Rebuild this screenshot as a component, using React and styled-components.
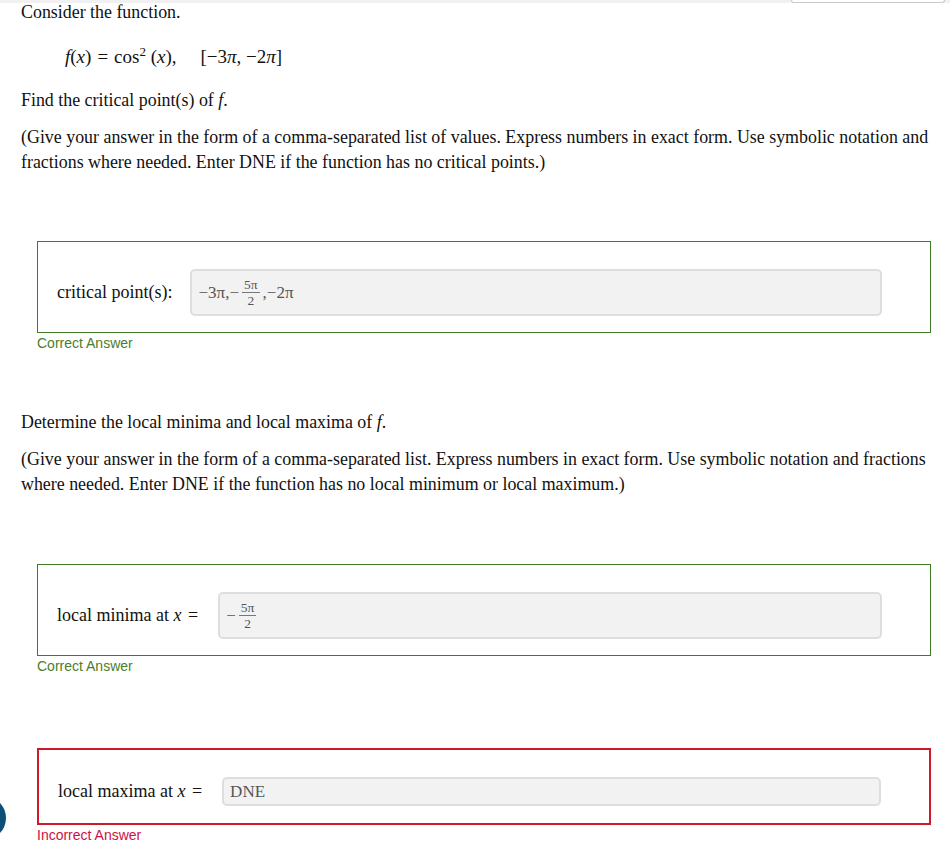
import styled, { createGlobalStyle } from 'styled-components';

const GlobalStyle = createGlobalStyle`
  body {
    margin: 0;
    background: #fff;
    font-family: "Liberation Serif", "Times New Roman", serif;
    color: #111;
  }
`;

const TopStrip = styled.div`
  display: flex;
  justify-content: flex-end;
  height: 3px;
  background: #f1f1f1;
`;

const TopTab = styled.div`
  width: 152px;
  height: 2px;
  margin-right: 5px;
  background: #fff;
  border: 1px solid #c9c9c9;
  border-top: none;
  border-radius: 0 0 4px 4px;
`;

const Page = styled.div`
  position: relative;
  padding: 0 16px 20px 21px;
  margin-top: -3px;
`;

const P = styled.p`
  margin: 0;
  font-size: 17.9px;
  line-height: 25px;
`;

const Formula = styled(P)`
  margin: 19px 0 19px 44px;
  font-size: 19px;
`;

const Spaced = styled(P)`
  margin-top: 12px;
`;

const I = styled.i`
  font-family: "Liberation Serif", "Times New Roman", serif;
  font-style: italic;
`;

const Op = styled.span`
  margin: 0 ${(p) => p.m}px;
`;

const Sup = styled.sup`
  font-size: 13px;
  line-height: 0;
`;

const Section = styled.div`
  margin-top: ${(p) => p.top}px;
  margin-left: ${(p) => p.indent || 0}px;
  margin-right: ${(p) => (p.indent ? 3 : 0)}px;
`;

const AnswerBox = styled.div`
  display: flex;
  align-items: center;
  gap: 18px;
  padding: 27px 48px ${(p) => (p.wrong ? 17 : 16)}px 19px;
  border: ${(p) => (p.wrong ? '2px solid #cc1a2a' : '1px solid #3e7b27')};
`;

const Label = styled.span`
  font-size: 18px;
  white-space: nowrap;
`;

const Field = styled.div`
  flex: 1;
  display: flex;
  align-items: center;
  box-sizing: border-box;
  height: ${(p) => p.h}px;
  padding: 0 6px;
  background: #f2f2f2;
  border: 2px solid #dedede;
  border-radius: 5px;
  color: #555;
  font-size: 17px;
`;

const Frac = styled.span`
  display: inline-flex;
  flex-direction: column;
  align-items: center;
  font-size: 13.5px;
  line-height: 15px;
  margin: 0 3px;
`;

const Num = styled.span`
  padding: 0 2px;
  border-bottom: 1px solid #777;
`;

const Status = styled.div`
  margin-top: 2px;
  font-family: "Liberation Sans", Arial, sans-serif;
  font-size: 14px;
  line-height: 16px;
  color: ${(p) => (p.wrong ? '#cf1145' : '#4b7d2b')};
`;

const Bubble = styled.div`
  position: absolute;
  left: -38px;
  top: 796px;
  width: 44px;
  height: 44px;
  border-radius: 50%;
  background: #0c4f77;
`;

const FivePi = () => (
  <Frac>
    <Num>5π</Num>
    <span>2</span>
  </Frac>
);

export default function App() {
  return (
    <>
      <GlobalStyle />
      <TopStrip>
        <TopTab />
      </TopStrip>
      <Page>
        <P>Consider the function.</P>
        <Formula>
          <I>f</I>(<I>x</I>)<Op m={6}>=</Op>cos<Sup>2</Sup> (<I>x</I>),<Op m={12} />[−3<I>π</I>, −2<I>π</I>]
        </Formula>
        <P>
          Find the critical point(s) of <I>f</I>.
        </P>
        <Spaced>
          (Give your answer in the form of a comma-separated list of values. Express numbers in exact form. Use symbolic
          notation and fractions where needed. Enter DNE if the function has no critical points.)
        </Spaced>

        <Section top={66} indent={16}>
          <AnswerBox>
            <Label>critical point(s):</Label>
            <Field h={47}>
              −3π,−<FivePi />,−2π
            </Field>
          </AnswerBox>
          <Status>Correct Answer</Status>
        </Section>

        <Section top={59}>
          <P>
            Determine the local minima and local maxima of <I>f</I>.
          </P>
          <Spaced>
            (Give your answer in the form of a comma-separated list. Express numbers in exact form. Use symbolic
            notation and fractions where needed. Enter DNE if the function has no local minimum or local maximum.)
          </Spaced>
        </Section>

        <Section top={67} indent={16}>
          <AnswerBox>
            <Label>
              local minima at <I>x</I> <Op m={2}>=</Op>
            </Label>
            <Field h={47}>
              −<FivePi />
            </Field>
          </AnswerBox>
          <Status>Correct Answer</Status>
        </Section>

        <Section top={74} indent={16}>
          <AnswerBox wrong>
            <Label>
              local maxima at <I>x</I> <Op m={2}>=</Op>
            </Label>
            <Field h={29}>DNE</Field>
          </AnswerBox>
          <Status wrong>Incorrect Answer</Status>
        </Section>
        <Bubble />
      </Page>
    </>
  );
}
